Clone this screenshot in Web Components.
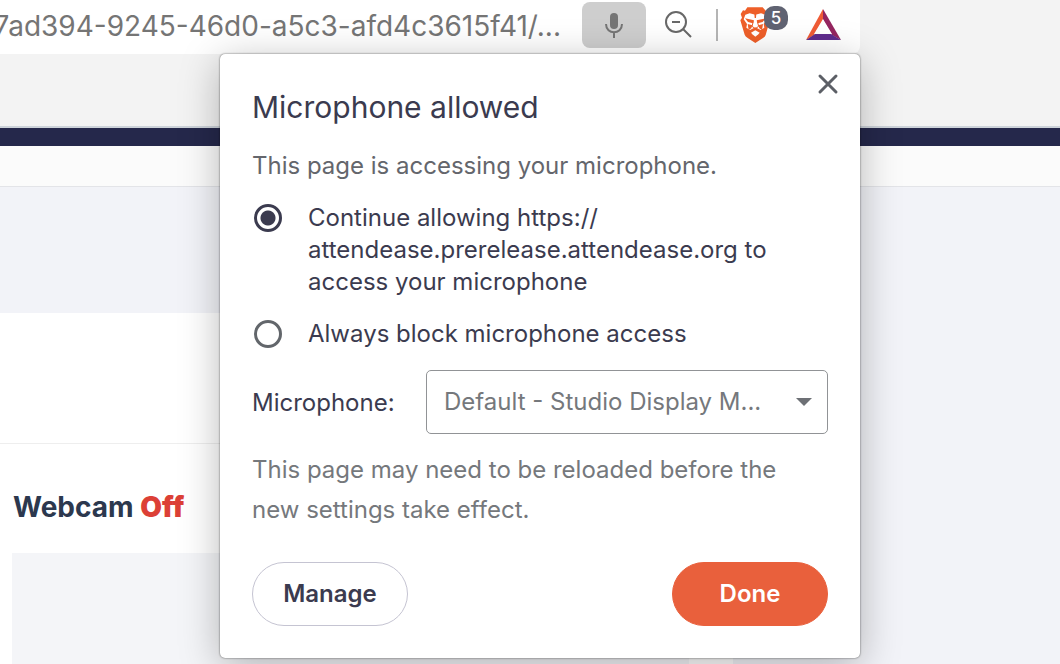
<!DOCTYPE html>
<html lang="en">
<head>
<meta charset="utf-8">
<title>Microphone allowed</title>
<style>
html, body { height: 100%; }
body { margin: 0; font-family: Inter, sans-serif; font-size: 24px; color: #3b3b4f; background: #f2f3f8; overflow: hidden; }
</style>
</head>
<body>
<browser-window>
  <browser-toolbar slot="toolbar" url="7ad394-9245-46d0-a5c3-afd4c3615f41/..." count="5"></browser-toolbar>
  <webcam-page slot="page"></webcam-page>
  <permission-dialog slot="dialog" heading="Microphone allowed">
    <span slot="intro">This page is accessing your microphone.</span>
    <span slot="allow">Continue allowing https://<br>attendease.prerelease.attendease.org to access your microphone</span>
    <span slot="block">Always block microphone access</span>
    <span slot="note">This page may need to be reloaded before the new settings take effect.</span>
  </permission-dialog>
</browser-window>

<template id="t-window">
<style>
:host { display: block; position: relative; min-height: 100vh; background: #f3f3f3; }
.dialog { position: absolute; top: 54px; right: 200px; width: 640px; }
</style>
<slot name="toolbar"></slot>
<slot name="page"></slot>
<div class="dialog"><slot name="dialog"></slot></div>
</template>

<template id="t-toolbar">
<style>
:host { display: block; padding-bottom: 72px; }
.bar { display: flex; align-items: center; height: 54px; margin-right: 200px; padding-right: 18px; box-sizing: border-box; background: #fff; border-radius: 0 0 8px 0; }
.bar > * { margin-bottom: 4px; }
.bar > .url { flex: 1; min-width: 0; display: flex; justify-content: flex-end; margin-bottom: 2px; white-space: nowrap; font-size: 28px; line-height: 40px; color: #757575; }
button { display: block; border: 0; padding: 0; background: none; }
.mic { width: 64px; height: 46px; margin-left: 21px; border-radius: 8px; background: #cecece; }
.zoom { margin-left: 18px; }
.rule { width: 2px; height: 32px; margin-left: 22px; background: #b5b5b5; }
.shield { position: relative; margin-left: 22px; }
.shield span { position: absolute; left: 24px; top: 0; width: 24px; height: 24px; border-radius: 10px; background: #606372; color: #fff; font: 500 17px/24px Inter, sans-serif; text-align: center; }
.bat { margin-left: 33px; }
svg { display: block; }
.mic svg { margin: 2px auto 0; }
</style>
<div class="bar">
  <div class="url"><span id="url"></span></div>
  <button class="mic" aria-label="Microphone"><svg width="24" height="30" viewBox="0 0 24 30"><rect x="8" y="2" width="8" height="16" rx="4" fill="#757575"/><path d="M4 13c0 11 16 11 16 0M12 21v6" fill="none" stroke="#757575" stroke-width="2"/></svg></button>
  <button class="zoom" aria-label="Zoom out"><svg width="30" height="32" viewBox="0 0 30 32"><circle cx="12" cy="13" r="10" fill="none" stroke="#686868" stroke-width="2"/><path d="M8 13h8M19 20l8 8" fill="none" stroke="#686868" stroke-width="2"/></svg></button>
  <span class="rule"></span>
  <button class="shield" aria-label="Brave Shields"><svg width="32" height="38" viewBox="11 20 96 114"><path fill="#ee5f29" d="M33 24H79L88 34l7-1 6 11-4 11 3 9-12 43q-2 6-8 9L57 131 34 116q-7-4-9-10L12 63l5-8-4-11 7-11 6 1z"/><path fill="#fff" d="M27 46l13-4 17 4 17-4 13 4 5 14-10 14 2 11-11 7-16-8-16 8-11-7 2-11-10-14z"/><path fill="#ee5f29" d="M26 57l27 6-3 9-15-4zM88 57l-27 6 3 9 15-4zM54 42h6l-1 14h-4zM34 74l14 4-3 9-8 5zM80 74l-14 4 3 9 8 5z"/><path fill="none" stroke="#ee5f29" stroke-width="3" d="M51 66l-4 15 10 7 10-7-4-15M57 86v8"/><path fill="#fff" d="M44 100l13-7 13 7-4 5-9 7-9-7z"/></svg><span id="count"></span></button>
  <button class="bat" aria-label="Brave Rewards"><svg width="37" height="34" viewBox="0 0 37 34"><path fill="#ef5b35" d="M18 1v11L9 27 1 32z"/><path fill="#94255f" d="M18 1l18 31-9-5-9-15z"/><path fill="#5f2c8d" d="M1 32l9-6h16l10 6z"/><path fill="#fff" d="M18 11l9 15H9z"/></svg></button>
</div>
</template>

<template id="t-page">
<style>
:host { display: block; border-top: 2px solid #cdd3da; }
.nav { height: 18px; background: #25284b; }
.sub { height: 40px; background: #fbfbfb; border-bottom: 1px solid #e3e4e8; }
.body { display: grid; grid-template-columns: minmax(0, 1fr) 327px; padding-top: 126px; background: #f2f3f8; }
.card { background: #fff; }
.top { height: 130px; border-bottom: 1px solid #eeeeee; }
h2 { margin: 0; padding: 44px 13px 27px; font: 700 28px/38px Inter, sans-serif; color: #2c384e; }
h2 b { color: #dc4036; }
.video { height: 111px; margin: 0 44px 0 12px; background: #f4f5f8; }
</style>
<div class="nav"></div>
<div class="sub"></div>
<div class="body">
  <section class="card">
    <div class="top"></div>
    <h2>Webcam <b>Off</b></h2>
    <div class="video"></div>
  </section>
</div>
</template>

<template id="t-dialog">
<style>
:host { display: block; box-sizing: border-box; padding: 32px; background: #fff; border-radius: 5px; box-shadow: 0 0 2px rgba(0,0,0,.65), 0 8px 40px rgba(0,0,0,.28); position: relative; }
h1 { margin: 0 0 22px; font: 400 30px/42px Inter, sans-serif; }
p { margin: 0; line-height: 32px; color: #64666c; }
.close { position: absolute; top: 18px; right: 20px; width: 24px; height: 24px; padding: 0; border: 0; background: none; }
.close svg { display: block; }
permission-choice { margin-top: 20px; }
.device { display: flex; align-items: center; justify-content: space-between; margin-top: 20px; }
.pick { position: relative; width: 402px; }
select { display: block; appearance: none; width: 100%; height: 64px; margin: 0; padding: 0 52px 0 17px; border: 1px solid #919396; border-radius: 5px; background: #fff; color: #75787c; font: 400 24px/32px Inter, sans-serif; }
.pick svg { position: absolute; right: 16px; top: 28px; pointer-events: none; }
.note { margin-top: 16px; line-height: 40px; color: #75787c; }
footer { display: flex; justify-content: space-between; margin-top: 32px; }
footer button { width: 156px; height: 64px; padding: 0; box-sizing: border-box; border-radius: 32px; border: 1px solid #c5c4d2; background: #fff; color: #3b3b4f; font: 600 24px/32px Inter, sans-serif; }
footer .done { border-color: #e9603c; background: #e9603c; color: #fff; }
</style>
<h1 id="heading"></h1>
<button class="close" aria-label="Close"><svg width="24" height="24" viewBox="0 0 24 24"><path d="M4 4l16 16M20 4L4 20" fill="none" stroke="#5c5f66" stroke-width="3" stroke-linecap="round"/></svg></button>
<p><slot name="intro"></slot></p>
<permission-choice checked><slot name="allow"></slot></permission-choice>
<permission-choice><slot name="block"></slot></permission-choice>
<div class="device">
  <label for="device">Microphone:</label>
  <div class="pick">
    <select id="device"><option>Default - Studio Display M...</option></select>
    <svg width="16" height="8" viewBox="0 0 16 8"><path d="M0 0h16L8 8z" fill="#6d7075"/></svg>
  </div>
</div>
<p class="note"><slot name="note"></slot></p>
<footer><button>Manage</button><button class="done">Done</button></footer>
</template>

<template id="t-choice">
<style>
:host { display: block; }
label { display: flex; align-items: flex-start; gap: 26px; line-height: 32px; }
input { appearance: none; flex: none; box-sizing: border-box; width: 28px; height: 28px; margin: 2px 0 0 2px; border: 3px solid #62666b; border-radius: 50%; }
input:checked { border-color: #3b3b4f; background: radial-gradient(circle, #3b3b4f 7px, transparent 8px); }
</style>
<label><input type="radio" name="access"><span><slot></slot></span></label>
</template>

<script>
class Base extends HTMLElement {
  constructor() {
    super();
    this.attachShadow({ mode: 'open' }).append(
      document.getElementById(this.constructor.template).content.cloneNode(true));
  }
  put(id, attr) { this.shadowRoot.getElementById(id).textContent = this.getAttribute(attr); }
}
class BrowserWindow extends Base { static template = 't-window'; }
class WebcamPage extends Base { static template = 't-page'; }
class BrowserToolbar extends Base {
  static template = 't-toolbar';
  connectedCallback() { this.put('url', 'url'); this.put('count', 'count'); }
}
class PermissionChoice extends Base {
  static template = 't-choice';
  connectedCallback() {
    const input = this.shadowRoot.querySelector('input');
    input.checked = this.hasAttribute('checked');
    input.addEventListener('change', () => {
      for (const other of this.parentNode.querySelectorAll('permission-choice')) {
        if (other !== this) other.shadowRoot.querySelector('input').checked = false;
      }
    });
  }
}
class PermissionDialog extends Base {
  static template = 't-dialog';
  connectedCallback() { this.put('heading', 'heading'); }
}
customElements.define('permission-choice', PermissionChoice);
customElements.define('permission-dialog', PermissionDialog);
customElements.define('browser-toolbar', BrowserToolbar);
customElements.define('webcam-page', WebcamPage);
customElements.define('browser-window', BrowserWindow);
</script>
</body>
</html>
